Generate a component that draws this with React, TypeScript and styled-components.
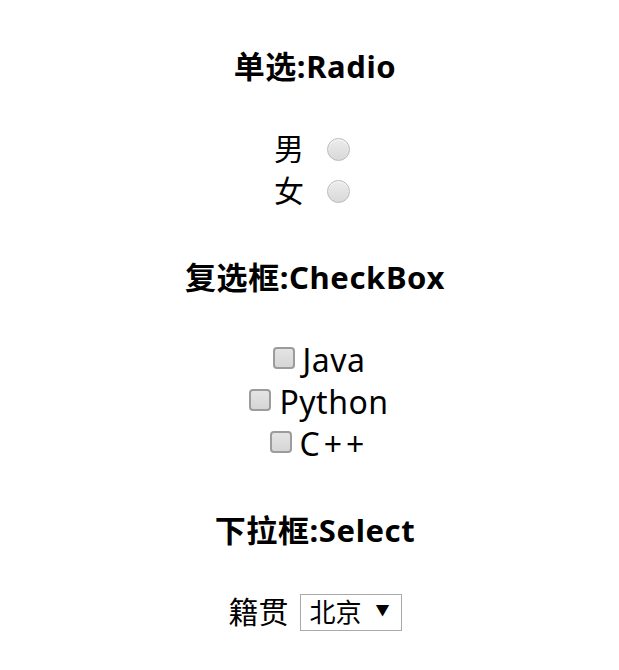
import React from "react";
import styled, { createGlobalStyle } from "styled-components";

const Global = createGlobalStyle`
  html, body { background: #ffffff; }
  body {
    margin: 8px;
    font-family: "Noto Sans", "Noto Sans CJK SC", sans-serif;
    color: #000;
  }
`;

const Page = styled.div`
  display: flex;
  flex-direction: column;
  align-items: center;
  padding-left: 11px;
  padding-top: 38px;
`;

const Heading = styled.h3<{ $gap: number }>`
  margin: ${(p) => p.$gap}px 0 0 0;
  font-size: 31px;
  font-weight: 700;
  letter-spacing: 0.6px;
  line-height: 40px;
  height: 40px;
  text-align: center;
`;

const Group = styled.div<{ $gap: number }>`
  margin-top: ${(p) => p.$gap}px;
  display: flex;
  flex-direction: column;
  align-items: center;
`;

const Row = styled.label`
  display: flex;
  align-items: center;
  height: 42px;
  font-size: 30px;
  line-height: 42px;
  white-space: nowrap;
`;

const Latin = styled.span<{ $spacing?: number }>`
  font-size: 32px;
  letter-spacing: ${(p) => p.$spacing ?? 0.5}px;
`;

const RadioInput = styled.input.attrs({ type: "radio" })`
  appearance: none;
  -webkit-appearance: none;
  width: 23px;
  height: 23px;
  margin: 0 6px 0 23px;
  border-radius: 50%;
  border: 1px solid #b9b9b9;
  background: linear-gradient(#ececec, #d9d9d9);
  box-shadow: inset 0 1px 1px rgba(255, 255, 255, 0.8);
  box-sizing: border-box;
`;

const CheckInput = styled.input.attrs({ type: "checkbox" })`
  appearance: none;
  -webkit-appearance: none;
  width: 22px;
  height: 22px;
  margin: 0 8px 4px 8px;
  border-radius: 4px;
  border: 2px solid #9c9c9c;
  background: linear-gradient(#e4e4e4, #d6d6d6);
  box-sizing: border-box;
`;

const SelectWrap = styled.span`
  position: relative;
  display: inline-flex;
  margin-left: 11px;
`;

const Select = styled.select`
  appearance: none;
  -webkit-appearance: none;
  width: 102px;
  height: 37px;
  border: 1px solid #a9a9a9;
  border-radius: 0;
  background: #fff;
  font-family: "Noto Sans", "Noto Sans CJK SC", sans-serif;
  font-size: 26px;
  line-height: 35px;
  padding: 0 0 0 9px;
  color: #000;
  box-sizing: border-box;
`;

const Arrow = styled.span`
  position: absolute;
  right: 12px;
  top: 8px;
  font-size: 14px;
  line-height: 16px;
  pointer-events: none;
`;

export default function App() {
  return (
    <>
      <Global />
      <Page>
        <Heading $gap={0}>单选:Radio</Heading>
        <Group $gap={42}>
          <Row>
            男<RadioInput name="sex" />
          </Row>
          <Row>
            女<RadioInput name="sex" />
          </Row>
        </Group>
        <Heading $gap={45}>复选框:CheckBox</Heading>
        <Group $gap={42}>
          <Row>
            <CheckInput />
            <Latin>Java</Latin>
          </Row>
          <Row>
            <CheckInput />
            <Latin>Python</Latin>
          </Row>
          <Row>
            <CheckInput />
            <Latin $spacing={4}>C++</Latin>
          </Row>
        </Group>
        <Heading $gap={45}>下拉框:Select</Heading>
        <Group $gap={41}>
          <Row>
            籍贯
            <SelectWrap>
              <Select defaultValue="bj">
                <option value="bj">北京</option>
                <option value="sh">上海</option>
              </Select>
              <Arrow>▼</Arrow>
            </SelectWrap>
          </Row>
        </Group>
      </Page>
    </>
  );
}
